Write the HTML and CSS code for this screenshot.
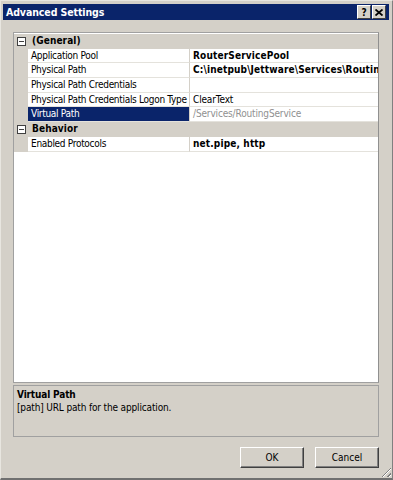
FILE: index.html
```html
<!DOCTYPE html>
<html lang="en">
<head>
  <meta charset="UTF-8">
  <title>Advanced Settings</title>
  <link rel="stylesheet" href="styles.css">
</head>
<body>
  <div class="window">
    <div class="titlebar">
      <span class="title">Advanced Settings</span>
      <span class="tbtn">?</span>
      <span class="tbtn">
        <svg width="8" height="7" viewBox="0 0 8 7">
          <path d="M0.5 0.5 L7.5 6.5 M7.5 0.5 L0.5 6.5" stroke="#000" stroke-width="1.8" fill="none"/>
        </svg>
      </span>
    </div>

    <div class="content">
      <div class="grid">
        <div class="row cat">
          <span class="toggle"></span>
          <span class="catname">(General)</span>
        </div>
        <div class="row">
          <span class="gutter"></span>
          <span class="name">Application Pool</span>
          <span class="value bold">RouterServicePool</span>
        </div>
        <div class="row">
          <span class="gutter"></span>
          <span class="name">Physical Path</span>
          <span class="value bold">C:\inetpub\Jettware\Services\RoutingService</span>
        </div>
        <div class="row">
          <span class="gutter"></span>
          <span class="name">Physical Path Credentials</span>
          <span class="value"></span>
        </div>
        <div class="row">
          <span class="gutter"></span>
          <span class="name">Physical Path Credentials Logon Type</span>
          <span class="value">ClearText</span>
        </div>
        <div class="row">
          <span class="gutter"></span>
          <span class="name selected">Virtual Path</span>
          <span class="value readonly">/Services/RoutingService</span>
        </div>
        <div class="row cat">
          <span class="toggle"></span>
          <span class="catname">Behavior</span>
        </div>
        <div class="row">
          <span class="gutter"></span>
          <span class="name">Enabled Protocols</span>
          <span class="value bold">net.pipe, http</span>
        </div>
      </div>

      <div class="desc">
        <div class="desc-title">Virtual Path</div>
        <div class="desc-text">[path] URL path for the application.</div>
      </div>

      <div class="buttons">
        <button class="btn">OK</button>
        <button class="btn">Cancel</button>
      </div>
    </div>
    <div class="grip"></div>
  </div>
</body>
</html>
```

FILE: styles.css
```css
body {
  margin: 0;
  background-color: #d4d0c8;
  font-family: 'DejaVu Sans Condensed', 'DejaVu Sans', Tahoma, sans-serif;
  font-stretch: condensed;
  font-size: 10px;
  letter-spacing: -0.15px;
  color: #000;
}
.window {
  position: relative;
  width: 393px;
  height: 480px;
  box-sizing: border-box;
  background-color: #d4d0c8;
  border-top: 1px solid #e8e6e0;
  border-left: 1px solid #e8e6e0;
  border-right: 1px solid #808080;
  border-bottom: 2px solid #707070;
  padding: 3px 3px 0 2px;
}
.titlebar {
  display: flex;
  align-items: center;
  height: 16px;
  background-color: #0a246a;
  color: #fff;
  padding: 0 3px 0 3px;
}
.title {
  flex: 1;
  font-weight: bold;
  font-size: 10.5px;
  letter-spacing: -0.1px;
}
.tbtn {
  display: flex;
  align-items: center;
  justify-content: center;
  width: 12px;
  height: 12px;
  margin-left: 1px;
  background-color: #d4d0c8;
  color: #000;
  font-size: 10px;
  font-weight: bold;
  border-top: 1px solid #fff;
  border-left: 1px solid #fff;
  border-right: 1px solid #404040;
  border-bottom: 1px solid #404040;
}
.content {
  padding: 12px 10px 0 10px;
}
.grid {
  height: 348px;
  padding-top: 1px;
  background-color: #fff;
  border: 1px solid #a0a0a0;
  border-right-color: #909090;
  overflow: hidden;
}
.row {
  display: flex;
  height: 14.7px;
  line-height: 14px;
  white-space: nowrap;
}
.cat {
  background-color: #d4d0c8;
  font-weight: bold;
}
.toggle {
  width: 9px;
  height: 9px;
  margin: 3px 5px 0 3px;
  box-sizing: border-box;
  border: 1px solid #404040;
  background:
    linear-gradient(#404040, #404040) center / 5px 1px no-repeat,
    #fff;
}
.catname {
  padding-left: 1px;
  letter-spacing: 0.1px;
}
.gutter {
  width: 14px;
  flex-shrink: 0;
  background-color: #d4d0c8;
}
.name {
  width: 158px;
  flex-shrink: 0;
  padding-left: 3px;
  letter-spacing: -0.3px;
  border-right: 1px solid #d4d0c8;
  border-bottom: 1px solid #e4e2dc;
  overflow: hidden;
}
.name.selected {
  background-color: #0a246a;
  color: #fff;
}
.value {
  flex: 1;
  padding-left: 3px;
  border-bottom: 1px solid #e4e2dc;
  overflow: hidden;
}
.value.bold {
  font-weight: bold;
  letter-spacing: 0.15px;
}
.value.readonly {
  color: #909090;
}
.desc {
  height: 46px;
  margin-top: 2px;
  padding: 2px 3px;
  border: 1px solid #a0a0a0;
  background-color: #d4d0c8;
}
.desc-title {
  font-weight: bold;
  line-height: 13px;
}
.desc-text {
  line-height: 13px;
}
.buttons {
  display: flex;
  justify-content: flex-end;
  gap: 11px;
  margin-top: 10px;
}
.btn {
  width: 64px;
  height: 21px;
  padding: 0;
  font-family: 'DejaVu Sans Condensed', 'DejaVu Sans', Tahoma, sans-serif;
  font-stretch: condensed;
  font-size: 10px;
  background-color: #d4d0c8;
  color: #000;
  border-top: 1px solid #fff;
  border-left: 1px solid #fff;
  border-right: 1px solid #404040;
  border-bottom: 1px solid #404040;
  box-shadow: inset -1px -1px 0 #808080;
}
.grip {
  position: absolute;
  right: 1px;
  bottom: 1px;
  width: 12px;
  height: 12px;
  background: repeating-linear-gradient(135deg, transparent 0 2px, #808080 2px 3px, #fff 3px 4px);
  clip-path: polygon(100% 0, 100% 100%, 0 100%);
}
```
